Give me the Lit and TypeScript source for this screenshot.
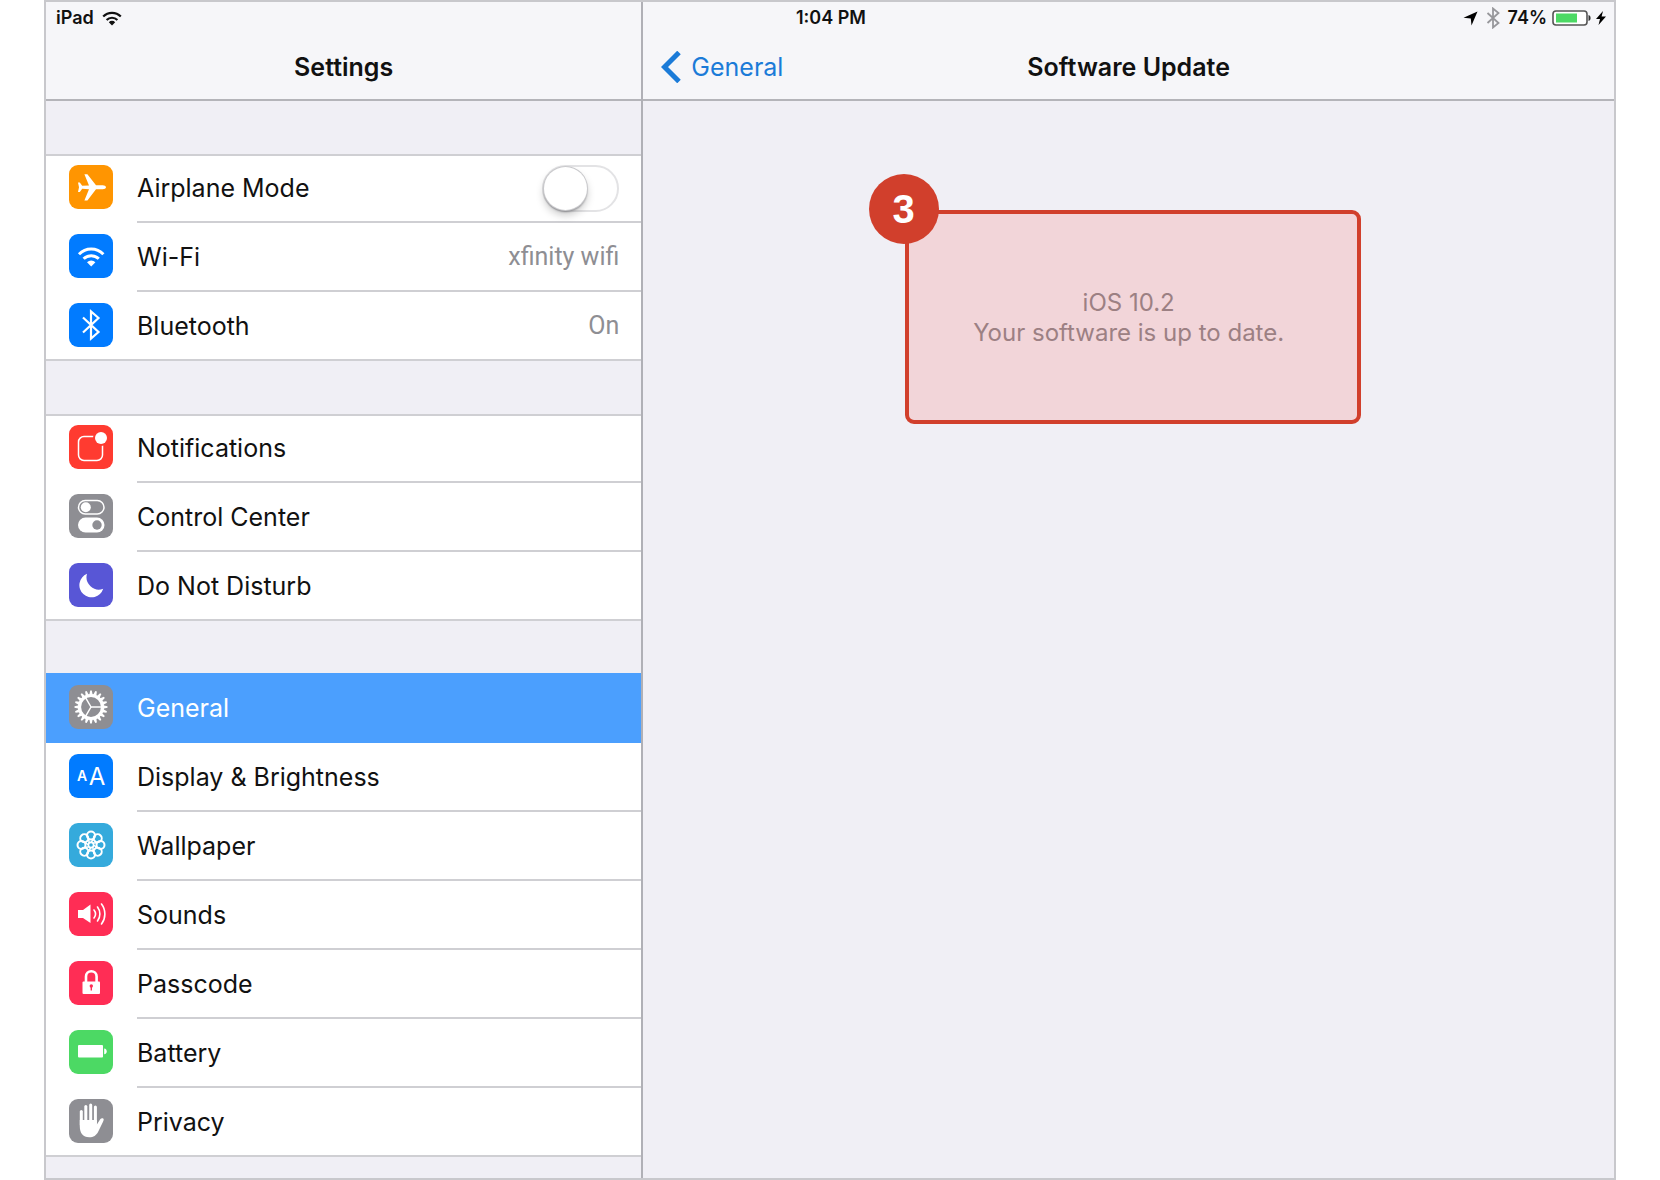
import { LitElement, html, css, svg, SVGTemplateResult, nothing } from "lit";
import { customElement, property, state } from "lit/decorators.js";

type Row = { id: string; label: string; color: string; value?: string };

const GROUPS: Row[][] = [
  [
    { id: "airplane", label: "Airplane Mode", color: "#ff9501" },
    { id: "wifi", label: "Wi-Fi", color: "#017bff", value: "xfinity wifi" },
    { id: "bluetooth", label: "Bluetooth", color: "#017bff", value: "On" },
  ],
  [
    { id: "notifications", label: "Notifications", color: "#ff3b30" },
    { id: "control", label: "Control Center", color: "#8e8e93" },
    { id: "dnd", label: "Do Not Disturb", color: "#5856d6" },
  ],
  [
    { id: "general", label: "General", color: "#8e8e93" },
    { id: "display", label: "Display & Brightness", color: "#017bff" },
    { id: "wallpaper", label: "Wallpaper", color: "#35aadc" },
    { id: "sounds", label: "Sounds", color: "#ff2d55" },
    { id: "passcode", label: "Passcode", color: "#ff2d55" },
    { id: "battery", label: "Battery", color: "#4cd964" },
    { id: "privacy", label: "Privacy", color: "#8e8e93" },
  ],
];

const range = (n: number) => Array.from({ length: n }, (_, i) => i);

const GLYPHS: Record<string, SVGTemplateResult> = {
  airplane: svg`<path fill="#fff" d="M37 22.3c0-1.3-1.6-2-3.2-2H27L18.4 9.2h-3L20 20.4l-6.8.4-2.4-3.2H9l1 4.7-1 4.7h1.800l2.400-3.200 6.800.4-4.600 11.200h3L27 24.300h6.800c1.600 0 3.200-.7 3.200-2z"/>`,
  wifi: svg`<g fill="none" stroke="#fff" stroke-width="3"><path d="M10 20.200a17 17 0 0 1 24.400 0"/><path d="M14.600 24.800a10.800 10.800 0 0 1 15.200 0"/></g><path fill="#fff" d="M18 28.200a6 6 0 0 1 8.400 0L22.200 32.400z"/>`,
  bluetooth: svg`<path fill="none" stroke="#fff" stroke-width="2.200" d="M14 14.500l15.500 14.500-7.500 6.500v-27l7.500 6.500L14 29.500"/>`,
  notifications: svg`<rect x="9.500" y="11.500" width="24" height="24" rx="5.500" fill="none" stroke="#fff" stroke-width="1.500"/><circle cx="32" cy="13" r="8" fill="#ff3b30"/><circle cx="32" cy="13" r="6" fill="#fff"/>`,
  control: svg`<rect x="9.500" y="6.500" width="25.500" height="13.500" rx="6.750" fill="none" stroke="#fff" stroke-width="1.500"/><circle cx="16.800" cy="13.300" r="5" fill="#fff"/><rect x="9" y="23.500" width="26.500" height="15" rx="7.500" fill="#fff"/><circle cx="28" cy="31" r="4.700" fill="#8e8e93"/>`,
  dnd: svg`<path fill="#fff" d="M18 10.800A12.200 12.200 0 1 0 34.200 25.800A12.400 12.400 0 0 1 18 10.800z"/>`,
  general: svg`<g transform="translate(22 22)"><g fill="#fff">${range(20).map(
    (i) => svg`<path transform="rotate(${i * 18})" d="M-1.700-12L-.800-16.500H.800L1.700-12z"/>`
  )}</g><circle r="11.500" fill="none" stroke="#fff" stroke-width="3.200"/><path d="M0 0H10.500M0 0L-5.300-9.200M0 0L-5.300 9.200" stroke="#fff" stroke-width="1.500"/></g>`,
  display: svg`<g fill="#fff" font-family="Inter, sans-serif" text-anchor="middle"><text x="13" y="27" font-size="14" font-weight="600">A</text><text x="28" y="31" font-size="24">A</text></g>`,
  wallpaper: svg`<g transform="translate(22 22)" fill="none" stroke="#fff" stroke-width="2">${range(8).map(
    (i) => svg`<circle transform="rotate(${i * 45})" cx="9.500" r="4"/>`
  )}${range(8).map(
    (i) => svg`<path transform="rotate(${i * 45})" d="M2.500 0L6 2.600" stroke-width="1.500"/>`
  )}<circle r="2.600" stroke-width="1.600"/><circle r="5.600" stroke-width="1"/></g>`,
  sounds: svg`<path fill="#fff" d="M9 18h5l7.500-5.500v18.500L14 26H9z"/><g fill="none" stroke="#fff" stroke-width="1.600" stroke-linecap="round"><path d="M25 18a6.500 6.500 0 0 1 0 8"/><path d="M28.500 15a11.500 11.500 0 0 1 0 14"/><path d="M32.500 12a16.500 16.500 0 0 1 0 20"/></g>`,
  passcode: svg`<rect x="13.500" y="20.500" width="17.500" height="12.500" rx="1" fill="#fff"/><path d="M17 21v-5.500a5.300 5.300 0 0 1 10.600 0V21" fill="none" stroke="#fff" stroke-width="2.600"/><circle cx="22.300" cy="25" r="1.700" fill="#ff2d55"/><path d="M22.300 25v4.500" stroke="#ff2d55" stroke-width="1.400"/>`,
  battery: svg`<rect x="9" y="15" width="25" height="12.500" rx="1" fill="#fff"/><path fill="#fff" d="M35.200 18.500c3.400.4 3.400 5.400 0 5.800z"/>`,
  privacy: svg`<g fill="none" stroke="#fff" stroke-linecap="round" stroke-width="3"><path d="M12.300 12.500V26"/><path d="M16.800 7.500V24"/><path d="M21.700 6V24"/><path d="M26.400 8V24"/></g><path fill="#fff" d="M10.800 21h17.100v4.500l3.300-5.200c1-1.500 3.500-1.300 3.500.2 0 .8-.4 1.600-.8 2.400l-4.600 9.600c-2 4-4.800 5.800-9 5.800-6.500 0-9.500-4.600-9.500-10.800z"/>`,
};

@customElement("settings-icon")
export class SettingsIcon extends LitElement {
  @property() name = "";
  @property() color = "";

  static styles = css`
    :host {
      display: block;
      flex: none;
      width: 44px;
      height: 44px;
    }
    .tile {
      display: block;
      width: 44px;
      height: 44px;
    }
  `;

  render() {
    return html`<svg class="tile" viewBox="0 0 44 44" aria-hidden="true">
      <rect width="44" height="44" rx="9" fill=${this.color} />
      ${GLYPHS[this.name]}
    </svg>`;
  }
}

@customElement("app-root")
export class AppRoot extends LitElement {
  @state() private selected = "general";
  @state() private airplane = false;

  static styles = css`
    :host {
      display: block;
      min-height: 100vh;
      background: #fff;
      color: #111;
      font-family: Inter, Roboto, "Liberation Sans", sans-serif;
      font-size: 25px;
      line-height: 30px;
    }
    * {
      box-sizing: border-box;
    }
    .frame {
      display: grid;
      grid-template-columns: 8fr 13fr;
      grid-template-rows: 32px 1fr;
      min-height: 100vh;
      margin: 0 44px;
      border: 2px solid #c8c8cc;
      background: #f0eff5;
    }
    .status {
      grid-area: 1 / 1 / 2 / 3;
      z-index: 1;
      display: grid;
      grid-template-columns: 1fr auto 1fr;
      align-items: center;
      padding: 0 8px 0 10px;
      font-size: 18px;
      line-height: 20px;
      font-weight: 600;
    }
    .status-side {
      display: flex;
      align-items: center;
      gap: 8px;
    }
    .status-end {
      justify-content: flex-end;
      gap: 5px;
    }
    .status svg {
      display: block;
      flex: none;
    }
    .sidebar {
      grid-area: 1 / 1 / 3 / 2;
      border-right: 2px solid #b0b0b6;
    }
    .detail {
      grid-area: 1 / 2 / 3 / 3;
    }
    .bar {
      display: grid;
      grid-template-columns: 1fr auto 1fr;
      align-items: center;
      height: 99px;
      padding: 32px 18px 0;
      border-bottom: 2px solid #b4b4b9;
      background: #f6f6f9;
    }
    .title {
      grid-column: 2;
      margin: 0;
      font-size: 25px;
      line-height: 30px;
      font-weight: 600;
    }
    .back {
      display: flex;
      align-items: center;
      gap: 10px;
      justify-self: start;
      color: #1b7bd8;
      text-decoration: none;
    }
    .back svg {
      display: block;
    }
    .groups {
      display: flex;
      flex-direction: column;
      gap: 53px;
      padding-top: 53px;
      padding-bottom: 21px;
    }
    .group {
      list-style: none;
      margin: 0;
      padding: 0;
      background: #fff;
      box-shadow: inset 0 2px #cfcfd3;
    }
    .row {
      display: flex;
      align-items: stretch;
      gap: 24px;
      height: 69px;
      padding-left: 23px;
      color: inherit;
      text-decoration: none;
    }
    .row settings-icon {
      margin-top: 11px;
    }
    .cell {
      flex: 1;
      display: flex;
      align-items: center;
      justify-content: space-between;
      padding-right: 22px;
      border-bottom: 2px solid #cfcfd3;
    }
    .item:last-child .row {
      box-shadow: inset 0 -2px #cfcfd3;
    }
    .row.selected {
      background: #4b9ffe;
      box-shadow: 0 -1px #4b9ffe;
      color: #fff;
    }
    .row.selected .cell {
      border-bottom-color: transparent;
    }
    .value {
      color: #8e8e93;
      font-family: Roboto, "Liberation Sans", sans-serif;
    }
    .switch {
      appearance: none;
      flex: none;
      display: flex;
      width: 77px;
      height: 47px;
      margin: 2px 0 0;
      border: 2px solid #e3e3e5;
      border-radius: 24px;
      background: #fff;
    }
    .switch::before {
      content: "";
      width: 43px;
      height: 43px;
      border-radius: 50%;
      background: #fff;
      box-shadow: 0 0 0 1px #c9c9cc, 0 2px 2px #8c8c90, 0 5px 8px #00000038;
    }
    .switch:checked {
      justify-content: flex-end;
      background: #4cd964;
    }
    .message {
      position: relative;
      width: 456px;
      max-width: 90%;
      margin: 109px auto 0;
      padding: 78px 0 76px;
      text-align: center;
      color: #8c8c91;
      font-size: 24px;
    }
    .message p {
      margin: 0;
    }
    .callout {
      position: absolute;
      inset: 0 -4px 0 4px;
      border: 4px solid #d13f2c;
      border-radius: 9px;
      background: #ff3c3224;
    }
    .badge {
      position: absolute;
      top: -40px;
      left: -40px;
      display: grid;
      place-items: center;
      width: 70px;
      height: 70px;
      border-radius: 50%;
      background: #d13f2c;
      color: #fff;
      font: bold 40px/46px "Liberation Sans", sans-serif;
    }
  `;

  private select(event: Event, id: string) {
    event.preventDefault();
    this.selected = id;
  }

  private renderRow(row: Row) {
    const icon = html`<settings-icon name=${row.id} color=${row.color}></settings-icon>`;
    if (row.id === "airplane") {
      return html`<li class="item">
        <label class="row">
          ${icon}
          <span class="cell">
            ${row.label}
            <input
              class="switch"
              type="checkbox"
              role="switch"
              .checked=${this.airplane}
              @change=${(e: Event) => (this.airplane = (e.target as HTMLInputElement).checked)}
            />
          </span>
        </label>
      </li>`;
    }
    const on = row.id === this.selected;
    return html`<li class="item">
      <a
        class=${on ? "row selected" : "row"}
        href="#${row.id}"
        aria-current=${on ? "page" : nothing}
        @click=${(e: Event) => this.select(e, row.id)}
      >
        ${icon}
        <span class="cell">
          <span>${row.label}</span>
          ${row.value ? html`<span class="value">${row.value}</span>` : nothing}
        </span>
      </a>
    </li>`;
  }

  render() {
    return html`<div class="frame">
      <div class="status">
        <div class="status-side">
          <span>iPad</span>
          <svg width="20" height="15" viewBox="0 0 20 15" aria-hidden="true">
            <g fill="none" stroke="#111" stroke-width="2.200">
              <path d="M1.200 5.600a12.400 12.400 0 0 1 17.600 0" />
              <path d="M4.600 9a7.600 7.600 0 0 1 10.800 0" />
            </g>
            <path fill="#111" d="M6.800 11.200a4.500 4.500 0 0 1 6.400 0L10 14.500z" />
          </svg>
        </div>
        <span>1:04 PM</span>
        <div class="status-side status-end">
          <svg width="15" height="15" viewBox="0 0 15 15" aria-hidden="true">
            <path fill="#000" d="M14.500.5L8.500 14.500 7.800 7.500.5 6.800z" />
          </svg>
          <svg width="20" height="22" viewBox="1 0 20 22" aria-hidden="true">
            <path fill="none" stroke="#97979b" stroke-width="1.800" d="M5.500 6l11 10-5.500 4.500v-19l5.500 4.500-11 10" />
          </svg>
          <span>74%</span>
          <svg width="39" height="16" viewBox="0 0 39 16" aria-hidden="true">
            <rect x="1" y="1" width="34" height="14" rx="3" fill="#fff" stroke="#555" stroke-width="1.600" />
            <rect x="4" y="3.500" width="21" height="9" fill="#4cd964" />
            <path fill="#333" d="M36.500 5c2.800.6 2.800 5.400 0 6z" />
          </svg>
          <svg width="10" height="14" viewBox="0 0 10 14" aria-hidden="true">
            <path fill="#000" d="M7 0L0 8h4L2.500 14 10 5.500H5.600z" />
          </svg>
        </div>
      </div>
      <nav class="sidebar" aria-label="Settings">
        <header class="bar"><h1 class="title">Settings</h1></header>
        <div class="groups">
          ${GROUPS.map((g) => html`<ul class="group">${g.map((r) => this.renderRow(r))}</ul>`)}
        </div>
      </nav>
      <main class="detail">
        <header class="bar">
          <a class="back" href="#general">
            <svg width="20" height="32" viewBox="0 0 20 32" aria-hidden="true">
              <path fill="none" stroke="#1b7bd8" stroke-width="5" d="M18 1.500L3.500 16 18 30.500" />
            </svg>
            General
          </a>
          <h2 class="title">Software Update</h2>
        </header>
        <section class="message">
          <p>iOS 10.2</p>
          <p>Your software is up to date.</p>
          <div class="callout"><span class="badge">3</span></div>
        </section>
      </main>
    </div>`;
  }
}
